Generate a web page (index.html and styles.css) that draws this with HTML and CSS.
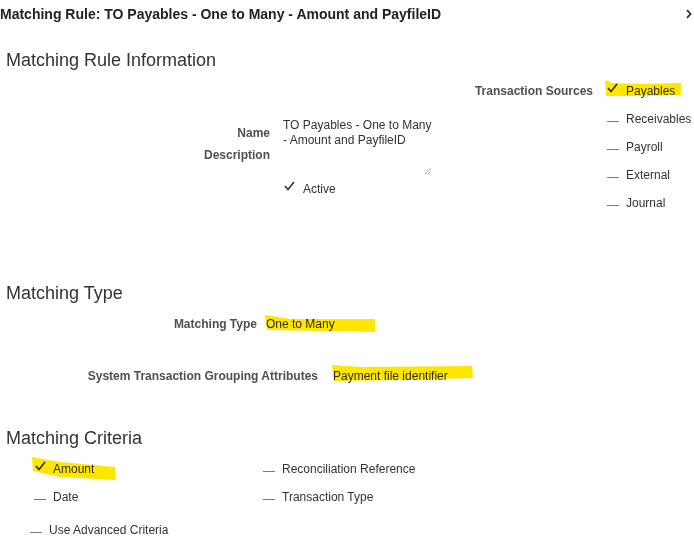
FILE: index.html
```html
<!DOCTYPE html>
<html lang="en">
<head>
<meta charset="utf-8">
<title>Matching Rule</title>
<link rel="stylesheet" href="styles.css">
</head>
<body>
<div class="page">
  <header class="titlebar">
    <span class="title">Matching Rule: TO Payables - One to Many - Amount and PayfileID</span>
    <svg class="close" width="6" height="10" viewBox="0 0 6 10"><path d="M1 1.2 L4.6 5 L1 8.8" fill="none" stroke="#333" stroke-width="1.8"/></svg>
  </header>

  <section class="info">
    <h2 class="heading">Matching Rule Information</h2>
    <div class="info-body">
      <div class="form">
        <div class="label lbl-name">Name</div>
        <div class="value name-value">TO Payables - One to Many<br>- Amount and PayfileID</div>
        <div class="label lbl-desc">Description</div>
        <div class="textarea">
          <svg class="grip" width="8" height="8" viewBox="0 0 8 8"><path d="M1 7 L7 1 M4 7 L7 4" stroke="#666" stroke-width="1" stroke-dasharray="1 1" fill="none"/></svg>
        </div>
        <div></div>
        <div class="item active-item">
          <span class="icon"><svg class="check" width="11" height="10" viewBox="0 0 11 10"><path d="M1 5 L4 8.6 L10 1" fill="none" stroke="#2f3650" stroke-width="1.6"/></svg></span>
          <span>Active</span>
        </div>
      </div>
      <div class="sources">
        <div class="label src-label">Transaction Sources</div>
        <div class="list">
          <div class="item"><span class="icon"><svg class="check" width="11" height="10" viewBox="0 0 11 10"><path d="M1 5 L4 8.6 L10 1" fill="none" stroke="#2f3650" stroke-width="1.6"/></svg></span><span>Payables</span></div>
          <div class="item"><span class="icon"><span class="dash"></span></span><span>Receivables</span></div>
          <div class="item"><span class="icon"><span class="dash"></span></span><span>Payroll</span></div>
          <div class="item"><span class="icon"><span class="dash"></span></span><span>External</span></div>
          <div class="item"><span class="icon"><span class="dash"></span></span><span>Journal</span></div>
        </div>
      </div>
    </div>
  </section>

  <section class="mtype">
    <h2 class="heading">Matching Type</h2>
    <div class="field-row row-type">
      <div class="label">Matching Type</div>
      <div class="value">One to Many</div>
    </div>
    <div class="field-row row-group">
      <div class="label">System Transaction Grouping Attributes</div>
      <div class="value">Payment file identifier</div>
    </div>
  </section>

  <section class="criteria">
    <h2 class="heading">Matching Criteria</h2>
    <div class="crit-grid">
      <div class="item"><span class="icon"><svg class="check" width="11" height="10" viewBox="0 0 11 10"><path d="M1 5 L4 8.6 L10 1" fill="none" stroke="#2f3650" stroke-width="1.6"/></svg></span><span>Amount</span></div>
      <div class="item"><span class="icon"><span class="dash"></span></span><span>Reconciliation Reference</span></div>
      <div class="item"><span class="icon"><span class="dash"></span></span><span>Date</span></div>
      <div class="item"><span class="icon"><span class="dash"></span></span><span>Transaction Type</span></div>
    </div>
    <div class="item advanced"><span class="icon"><span class="dash"></span></span><span>Use Advanced Criteria</span></div>
  </section>

  <svg class="marker" width="694" height="550" viewBox="0 0 694 550">
    <polygon points="605,80 612,83 646,84 681,83 681,95 640,96 606,96" />
    <polygon points="32,457 60,462 115,467 116,480 60,477 33,471" />
    <polygon points="265,315 290,319 375,319 375,332 320,331 267,330" />
    <polygon points="332,365 360,367 472,366 473,378 400,380 334,381" />
  </svg>
</div>
</body>
</html>
```

FILE: styles.css
```css
html, body {
  margin: 0;
  padding: 0;
  background: #fff;
}

body {
  font-family: "Liberation Sans", Arial, sans-serif;
  font-size: 12px;
  color: #333;
}

.page {
  position: relative;
  width: 694px;
  height: 550px;
  overflow: hidden;
}

.titlebar {
  display: flex;
  align-items: center;
  height: 28px;
}

.title {
  font-size: 14px;
  font-weight: bold;
  color: #222;
  line-height: 28px;
}

.close {
  margin-left: auto;
  margin-right: 2px;
}

.heading {
  margin: 0;
  padding-left: 6px;
  font-size: 18px;
  font-weight: normal;
  line-height: 22px;
  color: #333;
}

.info .heading {
  margin-top: 21px;
}

.label {
  font-weight: bold;
  color: #4f4f4f;
  text-align: right;
}

.value {
  color: #333;
}

.info-body {
  display: flex;
  margin-top: 6px;
}

.form {
  display: grid;
  grid-template-columns: 270px 150px;
  column-gap: 13px;
  padding-top: 41px;
  align-content: start;
}

.lbl-name {
  align-self: center;
}

.name-value {
  line-height: 15px;
}

.lbl-desc {
  line-height: 14px;
  align-self: start;
}

.textarea {
  position: relative;
  height: 28px;
}

.grip {
  position: absolute;
  right: 1px;
  bottom: 1px;
}

.sources {
  display: flex;
  gap: 14px;
  margin-left: auto;
}

.src-label {
  line-height: 28px;
}

.list {
  width: 87px;
  display: flex;
  flex-direction: column;
}

.item {
  display: flex;
  align-items: center;
  height: 28px;
  white-space: nowrap;
}

.active-item {
  height: 26px;
  padding-left: 1px;
}

.icon {
  width: 12px;
  margin-right: 7px;
  display: flex;
  align-items: center;
  justify-content: flex-start;
}

.check {
  margin-bottom: 6px;
}

.dash {
  display: block;
  width: 12px;
  height: 1px;
  background: #7a7a7a;
  margin-top: 4px;
}

.mtype .heading {
  margin-top: 65px;
}

.field-row {
  display: flex;
  line-height: 20px;
}

.row-type {
  margin-top: 10px;
  gap: 9px;
}

.row-type .label {
  width: 257px;
}

.row-group {
  margin-top: 32px;
  gap: 15px;
}

.row-group .label {
  width: 318px;
}

.criteria .heading {
  margin-top: 41px;
}

.crit-grid {
  display: grid;
  grid-template-columns: 229px auto;
  margin-top: 6px;
  padding-left: 34px;
}

.crit-grid .item:first-child {
  padding-left: 1px;
}

.crit-grid .item:first-child .icon {
  width: 11px;
}

.advanced {
  margin-top: 5px;
  padding-left: 30px;
}

.marker {
  position: absolute;
  top: 0;
  left: 0;
  pointer-events: none;
  mix-blend-mode: multiply;
}

.marker polygon {
  fill: #ffe600;
}
```
